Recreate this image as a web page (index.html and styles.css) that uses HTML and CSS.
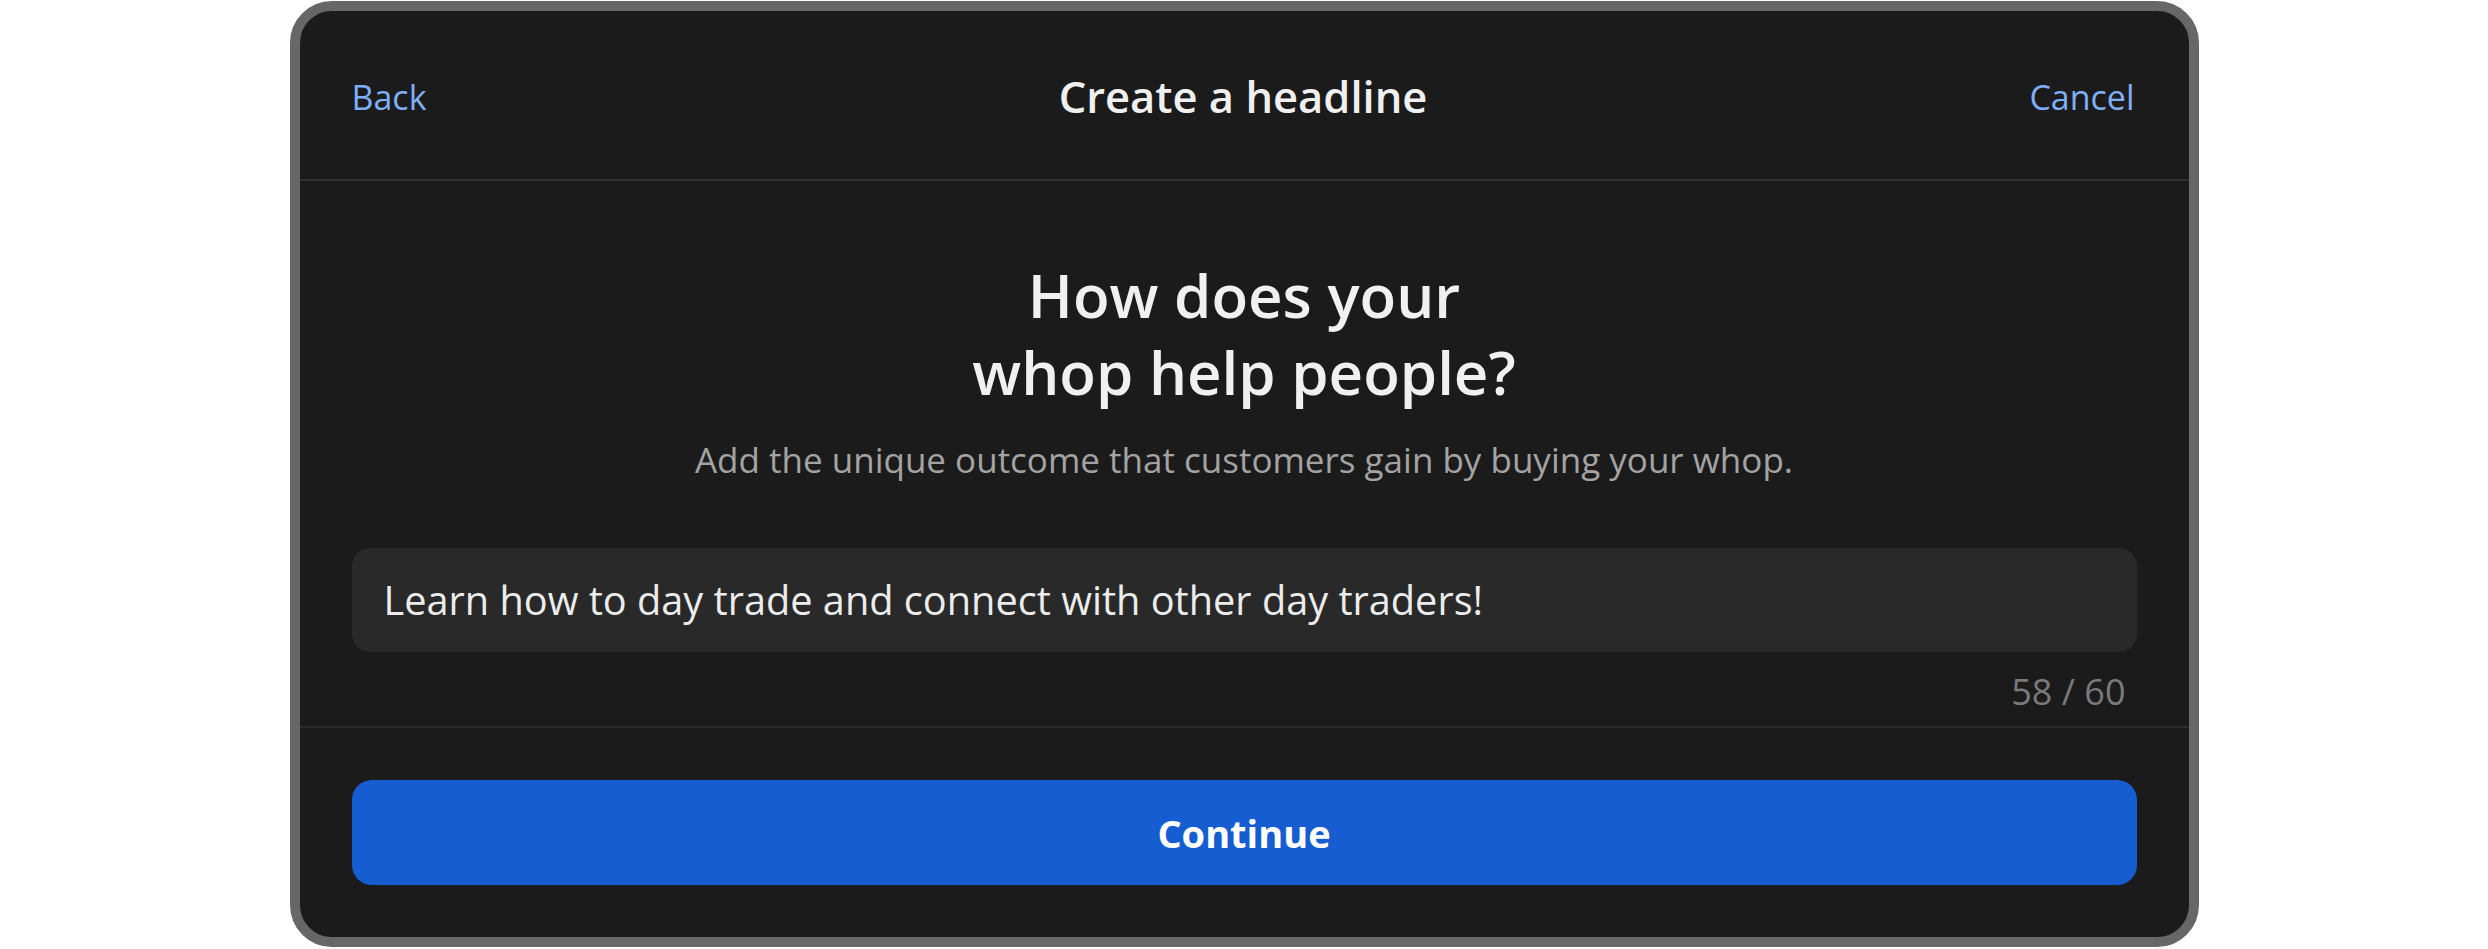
FILE: index.html
```html
<!DOCTYPE html>
<html lang="en">
<head>
<meta charset="utf-8">
<title>Create a headline</title>
<link rel="stylesheet" href="styles.css">
</head>
<body>
<div class="frame">
  <header class="topbar">
    <a class="link link-left">Back</a>
    <h1 class="title">Create a headline</h1>
    <a class="link link-right">Cancel</a>
  </header>
  <main class="content">
    <h2 class="heading">How does your<br>whop help people?</h2>
    <p class="subtitle">Add the unique outcome that customers gain by buying your whop.</p>
    <div class="field">Learn how to day trade and connect with other day traders!</div>
    <div class="counter">58 / 60</div>
  </main>
  <footer class="bottombar">
    <button class="continue">Continue</button>
  </footer>
</div>
</body>
</html>
```

FILE: styles.css
```css
* { box-sizing: border-box; }
html, body { margin: 0; padding: 0; background: #ffffff; }
body {
  font-family: "Open Sans", "Noto Sans", sans-serif;
  display: flex;
  justify-content: center;
  padding-top: 1px;
}
.frame {
  width: 1909px;
  height: 946px;
  background: #1b1b1b;
  border: 10px solid #676767;
  border-radius: 42px;
  display: flex;
  flex-direction: column;
  overflow: hidden;
}
.topbar {
  height: 170px;
  border-bottom: 2px solid #333333;
  display: grid;
  grid-template-columns: 1fr auto 1fr;
  align-items: center;
  padding: 4px 54px 0 52px;
}
.link {
  color: #80aff7;
  font-size: 34px;
  line-height: 40px;
  cursor: pointer;
}
.link-left { justify-self: start; }
.link-right { justify-self: end; }
.title {
  margin: 0;
  color: #f0f0f0;
  font-size: 43.5px;
  font-weight: 600;
  line-height: 52px;
}
.content {
  height: 547px;
  border-bottom: 2px solid #2c2c2c;
  padding: 76px 52px 0;
  display: flex;
  flex-direction: column;
  align-items: stretch;
}
.heading {
  margin: 0;
  text-align: center;
  color: #f0f0f0;
  font-size: 60px;
  font-weight: 600;
  line-height: 77px;
}
.subtitle {
  margin: 27px 0 0;
  text-align: center;
  color: #a3a3a3;
  font-size: 35px;
  line-height: 44px;
}
.field {
  margin-top: 66px;
  height: 104px;
  background: #292929;
  border-radius: 18px;
  padding: 0 32px 0 32px;
  display: flex;
  align-items: center;
  color: #ececec;
  font-size: 39.7px;
}
.counter {
  margin-top: 20px;
  text-align: right;
  padding-right: 11px;
  color: #7a7a7a;
  font-size: 36px;
  line-height: 40px;
}
.bottombar {
  flex: 1;
  padding: 52px 52px 0;
}
.continue {
  display: block;
  width: 100%;
  height: 105px;
  border: 0;
  border-radius: 20px;
  background: #165dd1;
  color: #ffffff;
  font-family: inherit;
  font-size: 38px;
  font-weight: 700;
  cursor: pointer;
}
```
